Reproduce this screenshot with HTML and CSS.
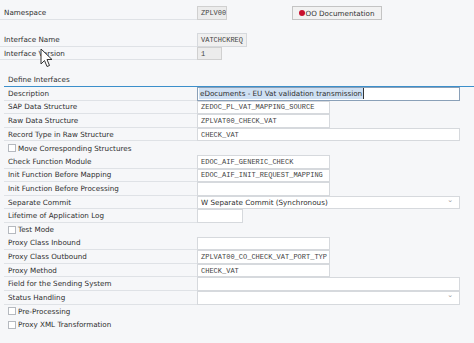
FILE: index.html
```html
<!DOCTYPE html>
<html lang="en">
  <head>
    <meta charset="UTF-8" />
    <title>Define Interfaces</title>
    <link rel="stylesheet" href="styles.css">
  </head>
  <body>
    <div class="header-area">
      <div class="row">
        <div class="label">Namespace</div>
        <div class="value">
          <span class="field mono ro w-ns">ZPLV00</span>
          <button class="doc-btn"><span class="dot"></span>OO Documentation</button>
        </div>
      </div>
      <div class="row blank"></div>
      <div class="row">
        <div class="label">Interface Name</div>
        <div class="value"><span class="field mono w-name">VATCHCKREQ</span></div>
      </div>
      <div class="row">
        <div class="label">Interface Version</div>
        <div class="value"><span class="field mono ro w-ver">1</span></div>
      </div>
    </div>

    <div class="panel">
      <div class="panel-title">Define Interfaces</div>

      <div class="row">
        <div class="label">Description</div>
        <div class="value"><span class="field long active"><span class="sel">eDocuments - EU Vat validation transmission</span></span></div>
      </div>
      <div class="row">
        <div class="label">SAP Data Structure</div>
        <div class="value"><span class="field mono mid">ZEDOC_PL_VAT_MAPPING_SOURCE</span></div>
      </div>
      <div class="row">
        <div class="label">Raw Data Structure</div>
        <div class="value"><span class="field mono mid">ZPLVAT00_CHECK_VAT</span></div>
      </div>
      <div class="row">
        <div class="label">Record Type in Raw Structure</div>
        <div class="value"><span class="field mono long">CHECK_VAT</span></div>
      </div>
      <div class="row check">
        <div class="label"><span class="box"></span>Move Corresponding Structures</div>
      </div>
      <div class="row">
        <div class="label">Check Function Module</div>
        <div class="value"><span class="field mono mid">EDOC_AIF_GENERIC_CHECK</span></div>
      </div>
      <div class="row">
        <div class="label">Init Function Before Mapping</div>
        <div class="value"><span class="field mono mid">EDOC_AIF_INIT_REQUEST_MAPPING</span></div>
      </div>
      <div class="row">
        <div class="label">Init Function Before Processing</div>
        <div class="value"><span class="field mono mid"></span></div>
      </div>
      <div class="row">
        <div class="label">Separate Commit</div>
        <div class="value"><span class="field long select">W Separate Commit (Synchronous)<span class="chev">&#8964;</span></span></div>
      </div>
      <div class="row">
        <div class="label">Lifetime of Application Log</div>
        <div class="value"><span class="field short"></span></div>
      </div>
      <div class="row check">
        <div class="label"><span class="box"></span>Test Mode</div>
      </div>
      <div class="row">
        <div class="label">Proxy Class Inbound</div>
        <div class="value"><span class="field mono mid"></span></div>
      </div>
      <div class="row">
        <div class="label">Proxy Class Outbound</div>
        <div class="value"><span class="field mono mid">ZPLVAT00_CO_CHECK_VAT_PORT_TYP</span></div>
      </div>
      <div class="row">
        <div class="label">Proxy Method</div>
        <div class="value"><span class="field mono mid">CHECK_VAT</span></div>
      </div>
      <div class="row">
        <div class="label">Field for the Sending System</div>
        <div class="value"><span class="field long"></span></div>
      </div>
      <div class="row">
        <div class="label">Status Handling</div>
        <div class="value"><span class="field long select"><span class="chev">&#8964;</span></span></div>
      </div>
      <div class="row check">
        <div class="label"><span class="box"></span>Pre-Processing</div>
      </div>
      <div class="row check">
        <div class="label"><span class="box"></span>Proxy XML Transformation</div>
      </div>
    </div>

    <svg class="cursor" width="13" height="20" viewBox="0 0 13 20">
      <path d="M1 1 L1 16 L4.5 12.5 L7 18.5 L9.5 17.5 L7 11.5 L12 11.5 Z" fill="#fff" stroke="#333" stroke-width="1"/>
    </svg>
  </body>
</html>
```

FILE: styles.css
```css
* {
  margin: 0;
  padding: 0;
  box-sizing: border-box;
}

body {
  background: #f6f7f9;
  font-family: "DejaVu Sans", Verdana, sans-serif;
  font-size: 7.2px;
  color: #2e2e2e;
  width: 474px;
  height: 343px;
  overflow: hidden;
  position: relative;
}

.header-area {
  padding-top: 6px;
  height: 72px;
}

.row {
  display: flex;
  height: 13.6px;
  align-items: stretch;
}

.label {
  width: 197px;
  padding-left: 4px;
  border-bottom: 1px solid #dfe2e6;
  display: flex;
  align-items: center;
  white-space: nowrap;
}

.row.blank .label,
.row.blank {
  border: none;
}

.value {
  flex: 1;
  display: flex;
  align-items: stretch;
}

.field {
  display: flex;
  align-items: center;
  height: 100%;
  background: #fff;
  border: 1px solid #d6d9dd;
  padding-left: 3px;
  white-space: nowrap;
  overflow: hidden;
  font-size: 7.2px;
}

.mono {
  font-family: "Liberation Mono", "Courier New", monospace;
  font-size: 7px;
  color: #444;
}

.ro {
  background: #ececec;
  border-color: #d0d0d0;
}

.w-ns { width: 30px; }
.w-name { width: 50px; background: #f0f0f0; }
.w-ver { width: 25px; }

.doc-btn {
  margin-left: 65px;
  width: 90px;
  height: 14px;
  border: 1px solid #c4c4c4;
  background: #f2f2f2;
  font-family: "DejaVu Sans", Verdana, sans-serif;
  font-size: 7.2px;
  color: #333;
  display: flex;
  align-items: center;
  justify-content: center;
}

.dot {
  width: 6px;
  height: 6px;
  border-radius: 50%;
  background: #c8102e;
  display: inline-block;
}

.panel {
  margin-left: 4px;
}

.panel-title {
  height: 15px;
  padding-left: 4px;
  display: flex;
  align-items: center;
  border-bottom: 1px solid #3b8fcb;
}

.panel .label {
  width: 193px;
}

.long { width: 263px; }
.mid { width: 133px; }
.short { width: 46px; }

.active {
  border-color: #8aa0b8;
  padding-left: 1px;
}

.sel {
  background: #cfe0f3;
  padding: 1px 1px;
  border-right: 1px solid #333;
}

.select {
  position: relative;
}

.chev {
  position: absolute;
  right: 6px;
  top: -1px;
  color: #999;
  font-size: 7px;
}

.row.check .label {
  border-bottom: none;
  padding-left: 4px;
}

.box {
  width: 8px;
  height: 8px;
  border: 1px solid #b5b9bf;
  background: #fff;
  margin-right: 2px;
}

.cursor {
  position: absolute;
  left: 40px;
  top: 48px;
}
```
